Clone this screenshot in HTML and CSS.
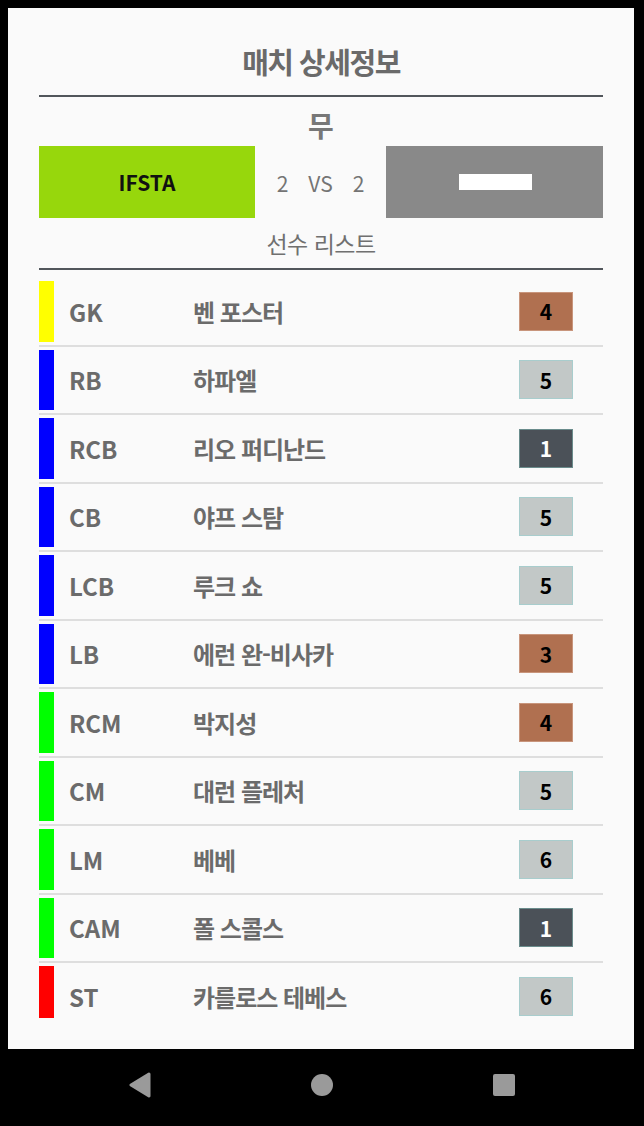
FILE: index.html
```html
<!DOCTYPE html>
<html lang="ko">
<head>
<meta charset="utf-8">
<title>매치 상세정보</title>
<link rel="stylesheet" href="styles.css">
</head>
<body>
<div class="screen">
  <div class="panel">
    <h1 class="title">매치 상세정보</h1>
    <div class="rule"></div>
    <div class="result">무</div>
    <div class="teams">
      <div class="team team-home">IFSTA</div>
      <div class="score"><span>2</span><span>VS</span><span>2</span></div>
      <div class="team team-away"><span class="redact"></span></div>
    </div>
    <div class="subtitle">선수 리스트</div>
    <div class="rule"></div>
    <ul class="players">
      <li class="row"><span class="pos-bar gk"></span><span class="pos">GK</span><span class="name">벤 포스터</span><span class="badge bronze">4</span></li>
      <li class="row"><span class="pos-bar df"></span><span class="pos">RB</span><span class="name">하파엘</span><span class="badge silver">5</span></li>
      <li class="row"><span class="pos-bar df"></span><span class="pos">RCB</span><span class="name">리오 퍼디난드</span><span class="badge dark">1</span></li>
      <li class="row"><span class="pos-bar df"></span><span class="pos">CB</span><span class="name">야프 스탐</span><span class="badge silver">5</span></li>
      <li class="row"><span class="pos-bar df"></span><span class="pos">LCB</span><span class="name">루크 쇼</span><span class="badge silver">5</span></li>
      <li class="row"><span class="pos-bar df"></span><span class="pos">LB</span><span class="name">에런 완-비사카</span><span class="badge bronze">3</span></li>
      <li class="row"><span class="pos-bar mf"></span><span class="pos">RCM</span><span class="name">박지성</span><span class="badge bronze">4</span></li>
      <li class="row"><span class="pos-bar mf"></span><span class="pos">CM</span><span class="name">대런 플레처</span><span class="badge silver">5</span></li>
      <li class="row"><span class="pos-bar mf"></span><span class="pos">LM</span><span class="name">베베</span><span class="badge silver">6</span></li>
      <li class="row"><span class="pos-bar mf"></span><span class="pos">CAM</span><span class="name">폴 스콜스</span><span class="badge dark">1</span></li>
      <li class="row last"><span class="pos-bar fw"></span><span class="pos">ST</span><span class="name">카를로스 테베스</span><span class="badge silver">6</span></li>
    </ul>
  </div>
  <nav class="navbar">
    <svg class="nav-icon" width="24" height="26" viewBox="0 0 24 26"><path d="M21 2 L3 13 L21 24 Z" fill="#9a9a9a" stroke="#9a9a9a" stroke-width="3" stroke-linejoin="round"/></svg>
    <svg class="nav-icon" width="24" height="24" viewBox="0 0 24 24"><circle cx="12" cy="12" r="11" fill="#9a9a9a"/></svg>
    <svg class="nav-icon" width="24" height="24" viewBox="0 0 24 24"><rect x="1" y="1" width="22" height="22" rx="2" fill="#9a9a9a"/></svg>
  </nav>
</div>
</body>
</html>
```
FILE: styles.css
```css
* { box-sizing: border-box; }
html, body { margin: 0; padding: 0; }
body {
  background: #000;
  width: 644px;
  height: 1126px;
  overflow: hidden;
  font-family: "Noto Sans CJK KR", "Noto Sans", sans-serif;
  color: #6b6b6b;
}
.screen { padding-top: 8px; }
.panel {
  margin: 0 10px 0 8px;
  height: 1041px;
  background: #fafafa;
  padding: 0 31px;
}
.title {
  margin: 0;
  height: 87px;
  padding-top: 18px;
  display: flex;
  align-items: center;
  justify-content: center;
  font-size: 29px;
  font-weight: 700;
  letter-spacing: -1.5px;
  color: #6a6a6a;
}
.rule { height: 2px; background: #51565b; }
.result {
  height: 49px;
  padding-top: 8px;
  line-height: 41px;
  text-align: center;
  font-size: 28px;
  font-weight: 700;
  color: #777;
}
.teams {
  display: grid;
  grid-template-columns: 216px 1fr 217px;
  height: 72px;
}
.team {
  display: flex;
  align-items: center;
  justify-content: center;
  font-size: 21px;
  font-weight: 700;
  color: #111;
}
.team-home { background: #97d70c; }
.team-away { background: #898989; }
.redact {
  display: block;
  width: 73px;
  height: 16px;
  background: #fff;
  margin-left: 2px;
}
.score {
  display: flex;
  align-items: center;
  justify-content: center;
  gap: 20px;
  font-size: 21px;
  color: #747474;
  padding-top: 2px;
}
.subtitle {
  height: 50px;
  line-height: 50px;
  text-align: center;
  font-size: 23px;
  letter-spacing: -0.5px;
  color: #707070;
}
.players {
  list-style: none;
  margin: 0;
  padding: 8px 0 0;
}
.row {
  display: flex;
  align-items: center;
  padding: 3px 0;
  border-bottom: 2px solid #dedede;
}
.row.last { border-bottom: 0; }
.pos-bar {
  width: 15px;
  height: 60.5px;
  flex: none;
}
.row.last .pos-bar { height: 52px; margin-bottom: 8.5px; }
.gk { background: #ffff00; }
.df { background: #0000ff; }
.mf { background: #00ff00; }
.fw { background: #ff0000; }
.pos {
  width: 139px;
  padding-left: 15px;
  font-size: 24px;
  font-weight: 700;
  color: #6b6b6b;
}
.name {
  flex: 1;
  font-size: 24px;
  font-weight: 700;
  letter-spacing: -1px;
  color: #6b6b6b;
}
.badge {
  width: 54px;
  height: 39px;
  margin-right: 30px;
  display: flex;
  align-items: center;
  justify-content: center;
  font-size: 21px;
  font-weight: 700;
  color: #000;
  border: 1px solid transparent;
}
.bronze { background: #b07050; border-color: #c8957c; }
.silver { background: #c2c8c7; border-color: #a8cdcd; }
.dark { background: #4b5158; border-color: #6a8c8c; color: #fff; }
.navbar {
  height: 77px;
  display: flex;
  align-items: center;
  justify-content: center;
  gap: 158px;
  padding-bottom: 5px;
}
.nav-icon { display: block; }
```
